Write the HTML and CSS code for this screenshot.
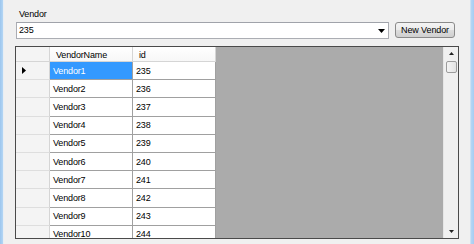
FILE: index.html
```html
<!DOCTYPE html>
<html>
<head>
<meta charset="utf-8">
<link rel="stylesheet" href="styles.css">
</head>
<body>
<div class="screen">
  <div class="edge edge-left"></div>
  <div class="form">
    <div class="label">Vendor</div>
    <div class="toolbar">
      <div class="combo">
        <span class="combo-text">235</span>
        <svg class="combo-arrow" width="7" height="4" viewBox="0 0 7 4"><polygon points="0,0 7,0 3.5,4" fill="#000"/></svg>
      </div>
      <button class="btn">New Vendor</button>
    </div>
    <div class="grid">
      <div class="table">
        <div class="corner"></div>
        <div class="colhead">VendorName</div>
        <div class="colhead">id</div>

        <div class="rowhead current"><svg width="4" height="7" viewBox="0 0 4 7"><polygon points="0,0 4,3.5 0,7" fill="#000"/></svg></div>
        <div class="cell selected">Vendor1</div><div class="cell">235</div>
        <div class="rowhead"></div><div class="cell">Vendor2</div><div class="cell">236</div>
        <div class="rowhead"></div><div class="cell">Vendor3</div><div class="cell">237</div>
        <div class="rowhead"></div><div class="cell">Vendor4</div><div class="cell">238</div>
        <div class="rowhead"></div><div class="cell">Vendor5</div><div class="cell">239</div>
        <div class="rowhead"></div><div class="cell">Vendor6</div><div class="cell">240</div>
        <div class="rowhead"></div><div class="cell">Vendor7</div><div class="cell">241</div>
        <div class="rowhead"></div><div class="cell">Vendor8</div><div class="cell">242</div>
        <div class="rowhead"></div><div class="cell">Vendor9</div><div class="cell">243</div>
        <div class="rowhead"></div><div class="cell">Vendor10</div><div class="cell">244</div>
      </div>
      <div class="empty"></div>
      <div class="vscroll">
        <div class="sb-btn"><svg width="5" height="3" viewBox="0 0 5 3"><polygon points="0,3 5,3 2.5,0" fill="#222"/></svg></div>
        <div class="sb-track"><div class="sb-thumb"></div></div>
        <div class="sb-btn"><svg width="5" height="3" viewBox="0 0 5 3"><polygon points="0,0 5,0 2.5,3" fill="#222"/></svg></div>
      </div>
    </div>
  </div>
  <div class="edge edge-right"></div>
</div>
</body>
</html>
```

FILE: styles.css
```css
html, body {
  margin: 0;
  padding: 0;
}
body {
  width: 474px;
  height: 244px;
  overflow: hidden;
  font-family: "Liberation Sans", Arial, sans-serif;
  font-size: 9px;
  color: #000;
}
.screen {
  display: flex;
  height: 244px;
}
.edge {
  width: 4px;
  flex: none;
}
.edge-left {
  background: linear-gradient(to right, #9cc6ee 0, #b4d6f4 3px, #e8eef4 3px);
}
.edge-right {
  background: linear-gradient(to right, #e6ecf2 0, #b4d6f4 1px, #a6cdf2 4px);
}
.form {
  flex: 1;
  background: #f0f0f0;
  padding: 9px 11px 0 11px;
  display: flex;
  flex-direction: column;
  min-width: 0;
}
.label {
  height: 11px;
  line-height: 11px;
  padding-left: 4px;
  letter-spacing: -0.15px;
}
.toolbar {
  display: flex;
  margin-top: 2px;
  height: 17px;
}
.combo {
  margin-left: 1px;
  width: 373px;
  height: 17px;
  box-sizing: border-box;
  border: 1px solid #abadb3;
  border-top-color: #a0a3aa;
  background: #fff;
  display: flex;
  align-items: center;
  justify-content: space-between;
  padding: 0 3px 0 2px;
}
.combo-text {
  letter-spacing: -0.15px;
  line-height: 15px;
}
.combo-arrow {
  display: block;
}
.btn {
  margin-left: 6px;
  width: 60px;
  height: 16px;
  box-sizing: border-box;
  border: 1px solid #8a8a8a;
  border-radius: 3px;
  background: linear-gradient(to bottom, #f4f4f4 0%, #ebebeb 48%, #dddddd 52%, #cfcfcf 100%);
  font-family: "Liberation Sans", Arial, sans-serif;
  font-size: 9px;
  letter-spacing: -0.1px;
  color: #000;
  padding: 0;
  line-height: 14px;
}
.grid {
  margin-top: 7px;
  height: 193px;
  box-sizing: border-box;
  border: 1px solid #4a4a4a;
  display: flex;
  overflow: hidden;
  background: #ababab;
}
.table {
  display: grid;
  grid-template-columns: 34px 83px 83px;
  grid-template-rows: 15px;
  grid-auto-rows: 18.2px;
  flex: none;
  background: #fff;
  align-self: flex-start;
}
.table > div {
  box-sizing: border-box;
  display: flex;
  align-items: center;
  white-space: nowrap;
  letter-spacing: -0.15px;
}
.corner {
  background: #f4f4f4;
  border-right: 1px solid #d5d5d5;
  border-bottom: 1px solid #d5d5d5;
}
.colhead {
  background: linear-gradient(to bottom, #ffffff, #f7f7f7);
  border-right: 1px solid #d5d5d5;
  border-bottom: 1px solid #d5d5d5;
  padding-left: 6px;
  padding-top: 1px;
}
.rowhead {
  background: #f4f4f4;
  border-right: 1px solid #d5d5d5;
  border-bottom: 1px solid #dedede;
  padding-left: 6px;
}
.rowhead svg {
  display: block;
}
.cell {
  background: #fff;
  border-right: 1px solid #a0a0a0;
  border-bottom: 1px solid #a0a0a0;
  padding-left: 3px;
}
.cell.selected {
  background: #3399ff;
  color: #fff;
}
.empty {
  flex: 1;
  background: #ababab;
}
.vscroll {
  width: 15px;
  flex: none;
  background: #f0f0f0;
  border-left: 1px solid #e6e6e6;
  box-sizing: border-box;
  display: flex;
  flex-direction: column;
}
.sb-btn {
  height: 13px;
  display: flex;
  align-items: center;
  justify-content: center;
  flex: none;
}
.sb-btn svg {
  display: block;
}
.sb-track {
  flex: 1;
  padding: 1px 1px 0 2px;
}
.sb-thumb {
  height: 12px;
  box-sizing: border-box;
  border: 1px solid #9c9c9c;
  border-radius: 2px;
  background: linear-gradient(to right, #f4f4f4, #e2e2e2);
}
```
